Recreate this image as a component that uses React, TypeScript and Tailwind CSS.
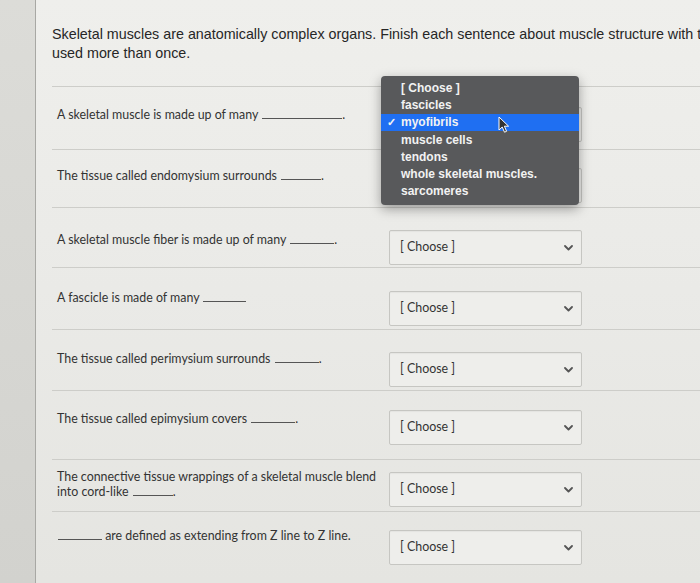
import React from "react";

type Row = {
  h: number;
  tTop: number;
  sTop: number;
  content: React.ReactNode;
};

const Blank = ({ w }: { w: number }) => (
  <span
    className="inline-block border-b border-[#555] align-baseline ml-[1px]"
    style={{ width: w, height: 9 }}
  />
);

const rows: Row[] = [
  {
    h: 63,
    tTop: 20,
    sTop: 20,
    content: (
      <>
        A skeletal muscle is made up of many <Blank w={80} />.
      </>
    ),
  },
  {
    h: 58,
    tTop: 18,
    sTop: 18,
    content: (
      <>
        The tissue called endomysium surrounds <Blank w={40} />.
      </>
    ),
  },
  {
    h: 60,
    tTop: 24,
    sTop: 22,
    content: (
      <>
        A skeletal muscle fiber is made up of many <Blank w={44} />.
      </>
    ),
  },
  {
    h: 62,
    tTop: 22,
    sTop: 23,
    content: (
      <>
        A fascicle is made of many <Blank w={43} />
      </>
    ),
  },
  {
    h: 61,
    tTop: 21,
    sTop: 22,
    content: (
      <>
        The tissue called perimysium surrounds <Blank w={44} />.
      </>
    ),
  },
  {
    h: 69,
    tTop: 20,
    sTop: 19,
    content: (
      <>
        The tissue called epimysium covers <Blank w={44} />.
      </>
    ),
  },
  {
    h: 52,
    tTop: 9,
    sTop: 12,
    content: (
      <>
        The connective tissue wrappings of a skeletal muscle blend into cord-like{" "}
        <Blank w={40} />.
      </>
    ),
  },
  {
    h: 66,
    tTop: 16,
    sTop: 18,
    content: (
      <>
        <Blank w={44} /> are defined as extending from Z line to Z line.
      </>
    ),
  },
];

const Chevron = () => (
  <svg width="9" height="6" viewBox="0 0 9 6" className="shrink-0">
    <path d="M1 1 L4.5 4.5 L8 1" fill="none" stroke="#555" strokeWidth="1.8" strokeLinecap="round" strokeLinejoin="round" />
  </svg>
);

const Select = () => (
  <div className="w-[193px] h-[35px] border border-[#c6c6c2] rounded-[2px] bg-[#eeeeeb] flex items-center justify-between pl-[10px] pr-[8px] shadow-[inset_0_1px_1px_rgba(0,0,0,0.04)]">
    <span className="text-[12.4px] text-[#333]" style={{ fontFamily: "Lato, 'Liberation Sans', sans-serif" }}>
      [ Choose ]
    </span>
    <Chevron />
  </div>
);

const options = ["[ Choose ]", "fascicles", "myofibrils", "muscle cells", "tendons", "whole skeletal muscles.", "sarcomeres"];

export default function App() {
  return (
    <div className="w-[700px] h-[583px] overflow-hidden flex bg-[#e9e9e6] relative">
      <div className="w-[36px] shrink-0 bg-linear-to-b from-[#dcdcd8] to-[#d2d2ce] border-r border-[#a8a8a4]" />
      <div className="flex-1 flex flex-col bg-linear-to-b from-[#efefec] via-[#eaeae7] to-[#e5e5e1] pl-[16px]">
        <div
          className="pt-[25px] text-[14.3px] leading-[19px] text-[#262626] pb-[23px]"
          style={{ fontFamily: "'Liberation Sans', Arial, sans-serif" }}
        >
          <div className="whitespace-nowrap overflow-hidden">
            Skeletal muscles are anatomically complex organs. Finish each sentence about muscle structure with the terms below. Terms may be
          </div>
          <div>used more than once.</div>
        </div>
        {rows.map((r, i) => (
          <div
            key={i}
            className="flex border-t border-[#cdcdc9] shrink-0"
            style={{ height: r.h }}
          >
            <div
              className="w-[330px] shrink-0 pl-[5px] text-[12.4px] leading-[15px] text-[#333]"
              style={{ paddingTop: r.tTop, fontFamily: "Lato, 'Liberation Sans', sans-serif" }}
            >
              {r.content}
            </div>
            <div style={{ paddingTop: r.sTop }} className="pl-[7px]">
              <Select />
            </div>
          </div>
        ))}
      </div>

      {/* open dropdown menu */}
      <div
        className="absolute left-[381px] top-[76px] w-[198px] h-[129px] rounded-[4px] bg-[#58595b] shadow-[0_4px_12px_rgba(0,0,0,0.35)] pt-[3px]"
        style={{ fontFamily: "'Liberation Sans', Arial, sans-serif" }}
      >
        {options.map((o) => {
          const sel = o === "myofibrils";
          return (
            <div
              key={o}
              className={`h-[17.3px] flex items-center text-[12px] font-bold text-[#f2f2f2] ${sel ? "bg-[#1f6ff2]" : ""}`}
            >
              <span className="w-[20px] pl-[6px] text-[11px]">{sel ? "✓" : ""}</span>
              <span>{o}</span>
            </div>
          );
        })}
      </div>

      {/* mouse cursor */}
      <svg className="absolute left-[498px] top-[116px]" width="12" height="18" viewBox="0 0 12 18">
        <path d="M1 1 L1 14 L4.2 11 L6.5 16.2 L8.6 15.3 L6.4 10.2 L10.6 10.2 Z" fill="#333" stroke="#fff" strokeWidth="1" strokeLinejoin="round" />
      </svg>
    </div>
  );
}
